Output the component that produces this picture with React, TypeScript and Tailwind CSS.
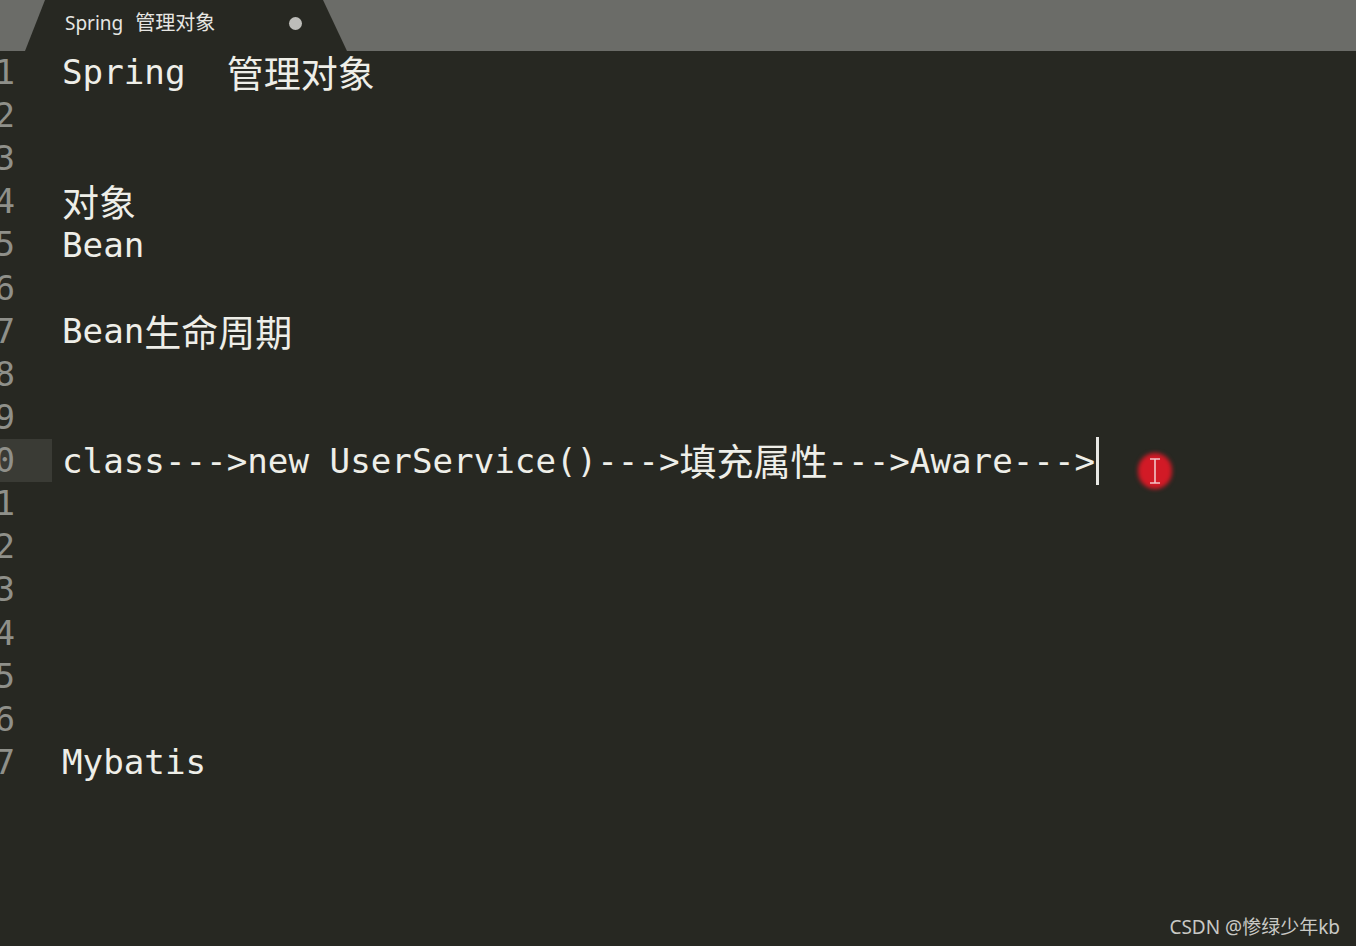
import React from "react";

const mono = "font-['DejaVu_Sans_Mono','Liberation_Mono',monospace]";
const cjk = "font-['Noto_Sans_CJK_SC',sans-serif] text-[37px] align-[4px]";

type Part = { t: string; zh?: boolean };

const lines: Part[][] = [
  [{ t: "Spring  " }, { t: "管理对象", zh: true }],
  [],
  [],
  [{ t: "对象", zh: true }],
  [{ t: "Bean" }],
  [],
  [{ t: "Bean" }, { t: "生命周期", zh: true }],
  [],
  [],
  [
    { t: "class--->new UserService()--->" },
    { t: "填充属性", zh: true },
    { t: "--->Aware--->" },
  ],
  [],
  [],
  [],
  [],
  [],
  [],
  [{ t: "Mybatis" }],
];

export default function App() {
  return (
    <div className="relative w-[1356px] h-[946px] overflow-hidden bg-[#272822] text-[#eeeee8]">
      {/* tab bar */}
      <div className="flex h-[51px] bg-[#6b6c68]">
        <div className="ml-[25px] w-[322px] h-full bg-[#272822] [clip-path:polygon(20px_0,298px_0,100%_100%,0_100%)] flex items-center">
          <span className="pl-[40px] w-[260px] whitespace-pre text-[19px] text-[#e6e6e2] font-['Noto_Sans','Noto_Sans_CJK_SC',sans-serif] leading-none pb-[6px]">
            Spring  <span className="ml-[2px] text-[20px]">管理对象</span>
          </span>
          <span className="ml-[4px] w-[13px] h-[13px] rounded-full bg-[#bdbdb9] mb-[5px]" />
        </div>
      </div>

      {/* editor */}
      <div className={`flex flex-col ${mono} text-[34.2px]`}>
        {lines.map((parts, i) => {
          const n = i + 1;
          const current = n === 10;
          return (
            <div key={n} className="flex h-[43.125px] items-center">
              <div
                className={`w-[52px] h-full overflow-hidden flex items-center justify-end pr-[37px] text-[#8f908a] whitespace-nowrap ${
                  current ? "bg-[#3a3b35]" : ""
                }`}
              >
                {n}
              </div>
              <div className="pl-[10px] whitespace-pre flex items-center h-full leading-none">
                {parts.map((p, j) => (
                  <span key={j} className={p.zh ? cjk : ""}>
                    {p.t}
                  </span>
                ))}
                {current && <span className="ml-[1px] w-[3px] h-[48px] bg-[#e8e8e4]" />}
              </div>
            </div>
          );
        })}
      </div>

      {/* mouse highlight */}
      <div className="absolute left-[1138px] top-[453px] w-[34px] h-[36px] rounded-full bg-[#d21a26] blur-[2px]" />
      <svg className="absolute left-[1147px] top-[457px]" width="16" height="28" viewBox="0 0 16 28">
        <path d="M3 2h10M8 2v24M3 26h10" stroke="#f2c4c6" strokeWidth="1.6" fill="none" />
      </svg>

      {/* watermark */}
      <div className="absolute right-[16px] bottom-[5px] text-[19px] text-[#c9c9c5] font-['Noto_Sans','Noto_Sans_CJK_SC',sans-serif]">
        CSDN @惨绿少年kb
      </div>
    </div>
  );
}
